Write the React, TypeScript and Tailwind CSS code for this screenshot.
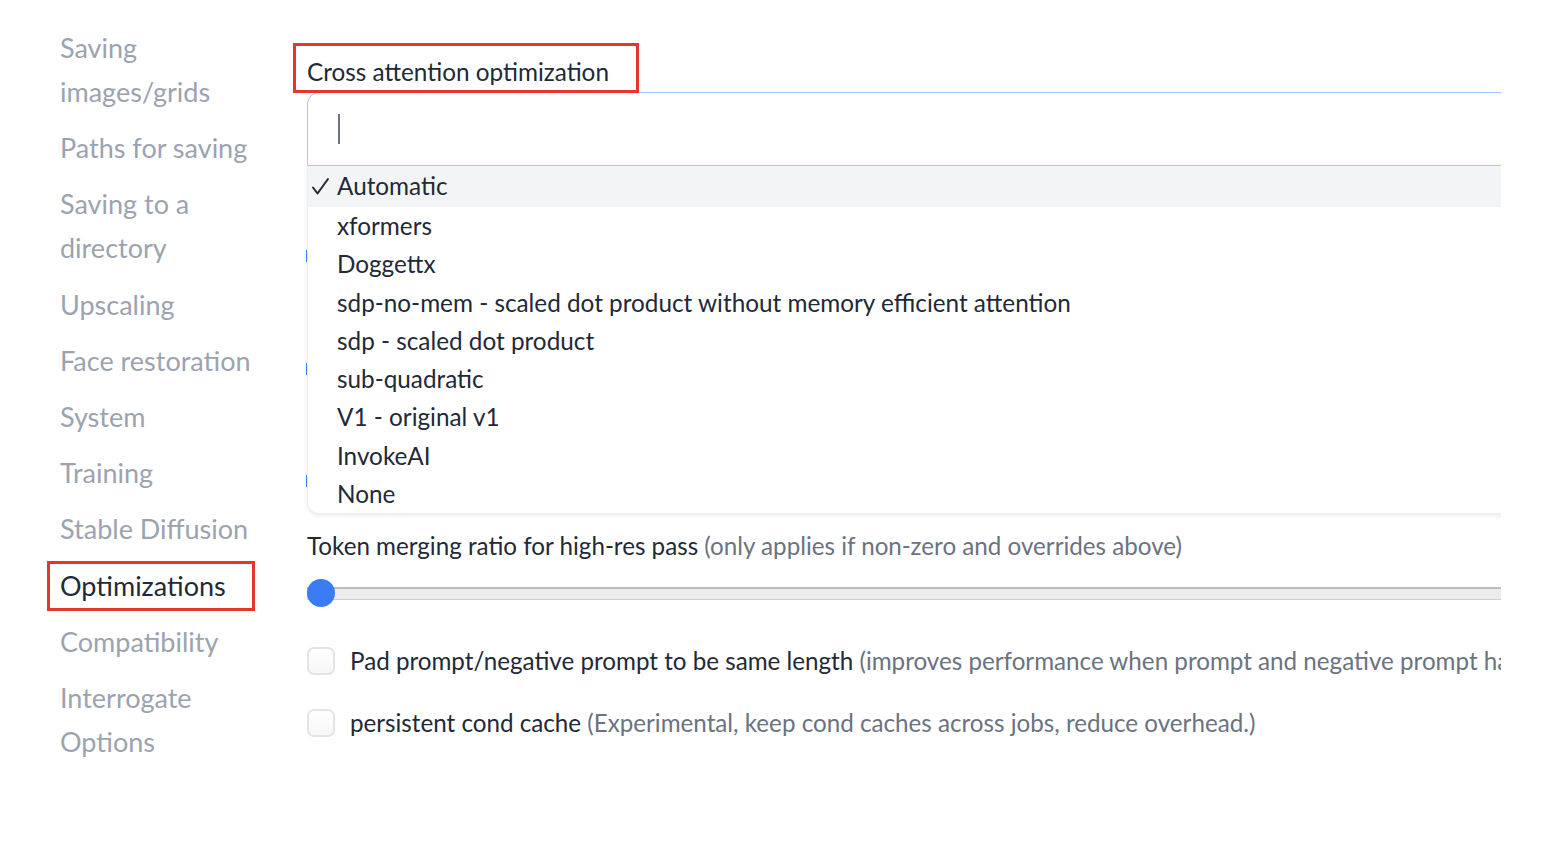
import React from 'react';

const sections: string[] = [
  'Saving images/grids',
  'Paths for saving',
  'Saving to a directory',
  'Upscaling',
  'Face restoration',
  'System',
  'Training',
  'Stable Diffusion',
  'Optimizations',
  'Compatibility',
  'Interrogate Options',
];

const options: string[] = [
  'Automatic',
  'xformers',
  'Doggettx',
  'sdp-no-mem - scaled dot product without memory efficient attention',
  'sdp - scaled dot product',
  'sub-quadratic',
  'V1 - original v1',
  'InvokeAI',
  'None',
];

const Checkbox: React.FC<{ label: string; hint: string }> = ({ label, hint }) => (
  <label className="flex items-center h-[34px] whitespace-nowrap">
    <span className="w-[28px] h-[28px] shrink-0 rounded-[7px] border-2 border-[#e2e4e8] bg-gradient-to-b from-white to-[#f7f7f8]" />
    <span className="ml-[15px] text-[24.2px] text-[#1f2937]">
      {label} <span className="text-[#6b7280]">{hint}</span>
    </span>
  </label>
);

export default function App() {
  return (
    <div className="min-h-screen w-full bg-white flex" style={{ fontFamily: 'Lato, "Noto Sans", sans-serif' }}>
      {/* settings nav */}
      <nav className="w-[293px] shrink-0 pl-[60px] pt-[26px] flex flex-col gap-[12.2px]">
        {sections.map((s) =>
          s === 'Optimizations' ? (
            <div key={s} className="-ml-[13px] -my-[3px] w-[208px] h-[50px] border-[3px] border-[#e5362b] pl-[10px] flex items-center text-[27px] leading-[44px] text-[#1f2937]">
              {s}
            </div>
          ) : (
            <div key={s} className="w-[210px] text-[27px] leading-[44px] text-[#9ca3af]">
              {s}
            </div>
          )
        )}
      </nav>

      {/* setting panel, clipped on the right */}
      <main className="w-[1208px] overflow-hidden pl-[14px] pt-[43px]">
        <div className="-ml-[14px] w-fit h-[50px] border-[3px] border-[#e5362b] pl-[11px] pr-[27px] flex items-center -mb-px relative z-10">
          <span className="text-[24.3px] text-[#1f2937] pt-[8px]">Cross attention optimization</span>
        </div>

        <div className="relative w-[1230px]">
          <div className="h-[74px] rounded-tl-[12px] border-[1.5px] border-[#a5c8fa] flex items-center pl-[30px]">
            <span className="w-[1.5px] h-[30px] bg-[#6b7280]" />
          </div>

          <div className="relative">
            <span className="absolute -left-[1px] top-[84px] w-[2px] h-[12px] bg-[#3b82f6]" />
            <span className="absolute -left-[1px] top-[197px] w-[2px] h-[12px] bg-[#3b82f6]" />
            <span className="absolute -left-[1px] top-[309px] w-[2px] h-[12px] bg-[#3b82f6]" />
            <ul className="relative rounded-bl-[12px] bg-white border border-[#eceef1] border-t-0 shadow-[0_2px_4px_rgba(0,0,0,0.08)] text-[24.3px] text-[#1f2937]">
              {options.map((o, i) => (
                <li
                  key={o}
                  className={
                    i === 0
                      ? 'h-[41px] bg-[#f3f4f6] flex items-center pl-[3px]'
                      : 'h-[38.3px] flex items-center pl-[29px]'
                  }
                >
                  {i === 0 && (
                    <svg className="w-[19px] h-[19px] mr-[7px]" viewBox="0 0 19 19" fill="none" stroke="#1f2937" strokeWidth={2} strokeLinecap="round" strokeLinejoin="round">
                      <path d="M2 10.5 L6.5 16.5 L17 2" />
                    </svg>
                  )}
                  {o}
                </li>
              ))}
            </ul>
          </div>
        </div>

        <div className="mt-[15px] h-[34px] flex items-center whitespace-nowrap text-[24.2px] text-[#1f2937]">
          Token merging ratio for high-res pass&nbsp;
          <span className="text-[#6b7280]">(only applies if non-zero and overrides above)</span>
        </div>

        <div className="relative mt-[16px] h-[28px] w-[1220px] flex items-center">
          <div className="w-full h-[13px] bg-[#ececec] border border-[#cfcfcf] border-t-[2px] border-t-[#bdbdbd]" />
          <span className="absolute left-0 top-0 w-[28px] h-[28px] rounded-full bg-[#3b7cf4]" />
        </div>

        <div className="mt-[37px] flex flex-col gap-[28px]">
          <Checkbox
            label="Pad prompt/negative prompt to be same length"
            hint="(improves performance when prompt and negative prompt have different lengths; changes seeds)"
          />
          <Checkbox
            label="persistent cond cache"
            hint="(Experimental, keep cond caches across jobs, reduce overhead.)"
          />
        </div>
      </main>
    </div>
  );
}
